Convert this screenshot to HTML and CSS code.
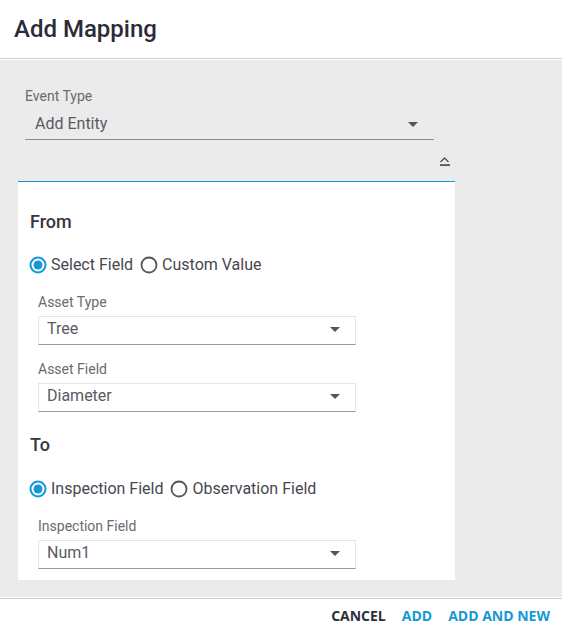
FILE: index.html
```html
<!DOCTYPE html>
<html>
<head>
<meta charset="utf-8">
<link rel="stylesheet" href="styles.css">
</head>
<body>
<div class="dialog">
  <header class="header"><h1 class="title">Add Mapping</h1></header>
  <main class="content">
    <div class="column">
      <div class="event-field">
        <div class="label">Event Type</div>
        <div class="underline-select">
          <span class="value">Add Entity</span>
          <span class="caret"></span>
        </div>
      </div>
      <div class="collapse-row">
        <svg class="collapse-icon" width="12" height="12" viewBox="0 0 12 12">
          <polyline points="1.5,6 5.5,2 9.5,6" fill="none" stroke="#555" stroke-width="1.4"/>
          <rect x="1" y="8.2" width="10" height="1.8" fill="#555"/>
        </svg>
      </div>
      <section class="panel">
        <h2 class="section-title">From</h2>
        <div class="radio-row">
          <label class="radio">
            <svg class="radio-icon" width="20" height="20" viewBox="0 0 20 20"><circle cx="10" cy="10" r="7.5" fill="none" stroke="#1598d6" stroke-width="2"/><circle cx="10" cy="10" r="4.5" fill="#1598d6"/></svg>
            <span>Select Field</span>
          </label>
          <label class="radio">
            <svg class="radio-icon" width="20" height="20" viewBox="0 0 20 20"><circle cx="10" cy="10" r="7.5" fill="none" stroke="#555" stroke-width="1.8"/></svg>
            <span>Custom Value</span>
          </label>
        </div>
        <div class="field first">
          <div class="label">Asset Type</div>
          <div class="box-select"><span class="value">Tree</span><span class="caret"></span></div>
        </div>
        <div class="field">
          <div class="label">Asset Field</div>
          <div class="box-select"><span class="value">Diameter</span><span class="caret"></span></div>
        </div>
        <h2 class="section-title to">To</h2>
        <div class="radio-row lower">
          <label class="radio">
            <svg class="radio-icon" width="20" height="20" viewBox="0 0 20 20"><circle cx="10" cy="10" r="7.5" fill="none" stroke="#1598d6" stroke-width="2"/><circle cx="10" cy="10" r="4.5" fill="#1598d6"/></svg>
            <span>Inspection Field</span>
          </label>
          <label class="radio">
            <svg class="radio-icon" width="20" height="20" viewBox="0 0 20 20"><circle cx="10" cy="10" r="7.5" fill="none" stroke="#555" stroke-width="1.8"/></svg>
            <span>Observation Field</span>
          </label>
        </div>
        <div class="field first">
          <div class="label">Inspection Field</div>
          <div class="box-select"><span class="value">Num1</span><span class="caret"></span></div>
        </div>
      </section>
    </div>
  </main>
  <footer class="footer">
    <button class="btn cancel">CANCEL</button>
    <button class="btn primary">ADD</button>
    <button class="btn primary">ADD AND NEW</button>
  </footer>
</div>
</body>
</html>
```

FILE: styles.css
```css
* { box-sizing: border-box; }
html, body { margin: 0; padding: 0; background: #fff; }
body { font-family: Roboto, "Noto Sans", sans-serif; width: 562px; }

.header {
  padding: 13px 14px 13px;
  border-bottom: 1px solid #cfcfcf;
  margin-bottom: 1px;
}
.title {
  margin: 0;
  font-size: 24px;
  line-height: 32px;
  font-weight: 500;
  color: #2b2b3a;
}

.content {
  background: #ebebeb;
  padding: 28px 0 17px 18px;
}
.column { width: 437px; }

.label {
  font-size: 14px;
  line-height: 16px;
  color: #6a6a72;
}

.event-field { margin-left: 7px; width: 409px; }
.underline-select {
  display: flex;
  align-items: center;
  justify-content: space-between;
  margin-top: 4px;
  padding: 4px 16px 3px 10px;
  border-bottom: 1px solid #8c8c8c;
}
.value {
  font-size: 16px;
  line-height: 24px;
  color: #5a5a62;
}
.caret {
  width: 0;
  height: 0;
  border-left: 5px solid transparent;
  border-right: 5px solid transparent;
  border-top: 5px solid #555;
}

.collapse-row {
  height: 41px;
  display: flex;
  justify-content: flex-end;
  align-items: center;
  padding-right: 4px;
  padding-top: 2px;
}
.collapse-icon { display: block; }

.panel {
  background: #fff;
  border-top: 1px solid #1598d6;
  padding: 28px 12px 11px;
}
.section-title {
  margin: 0;
  font-size: 18px;
  line-height: 24px;
  font-weight: 500;
  color: #35353f;
}
.section-title.to { margin-top: 21px; }

.radio-row {
  display: flex;
  align-items: center;
  margin-top: 19px;
  height: 24px;
}
.radio-row.lower { margin-top: 20px; }
.radio {
  display: flex;
  align-items: center;
  gap: 3px;
  margin-right: 8px;
  font-size: 16px;
  line-height: 24px;
  color: #474752;
}
.radio-icon { display: block; margin-left: -2px; }

.field { margin-left: 8px; width: 318px; margin-top: 16px; }
.field.first { margin-top: 17px; }
.box-select {
  display: flex;
  align-items: center;
  justify-content: space-between;
  margin-top: 6px;
  padding: 0 15px 3px 8px;
  border: 1px solid #e6e6e6;
  border-bottom-color: #9a9a9a;
}

.footer {
  border-top: 1px solid #cfcfcf;
  margin-top: 1px;
  display: flex;
  justify-content: flex-end;
  padding: 7px 4px 6px 0;
}
.btn {
  font-family: "Open Sans", "Liberation Sans", sans-serif;
  font-weight: 700;
  font-size: 14px;
  line-height: 20px;
  padding: 0 8px;
  border: 0;
  background: none;
  color: #1598d6;
}
.btn.cancel { color: #2e2e3c; }
```
